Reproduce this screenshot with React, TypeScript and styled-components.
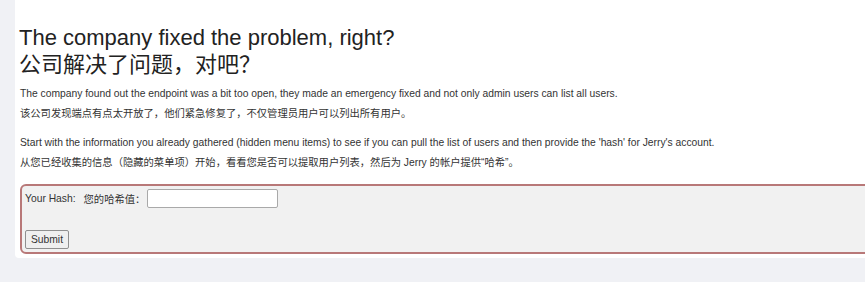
import React from 'react';
import styled, { createGlobalStyle } from 'styled-components';

const GlobalStyle = createGlobalStyle`
  html, body {
    margin: 0;
    padding: 0;
    background-color: #f0f1f5;
    overflow: hidden;
  }
  body {
    font-family: Arial, 'Liberation Sans', 'Noto Sans CJK SC', sans-serif;
    color: #333;
  }
`;

const App = () => {
  return (
    <>
      <GlobalStyle />
      <Page>
        <Panel>
          <Heading>
            The company fixed the problem, right?
            <br />
            公司解决了问题，对吧？
          </Heading>
          <Paragraph>
            The company found out the endpoint was a bit too open, they made an emergency fixed and not
            only admin users can list all users.
            <br />
            该公司发现端点有点太开放了，他们紧急修复了，不仅管理员用户可以列出所有用户。
          </Paragraph>
          <Paragraph>
            Start with the information you already gathered (hidden menu items) to see if you can pull
            the list of users and then provide the 'hash' for Jerry's account.
            <br />
            从您已经收集的信息（隐藏的菜单项）开始，看看您是否可以提取用户列表，然后为 Jerry 的帐户提供“哈希”。
          </Paragraph>
          <AttackForm onSubmit={(e) => e.preventDefault()}>
            <FieldRow>
              <Label>Your Hash:</Label>
              <Label>您的哈希值：</Label>
              <HashInput type="text" />
            </FieldRow>
            <SubmitButton type="submit">Submit</SubmitButton>
          </AttackForm>
        </Panel>
      </Page>
    </>
  );
};

export default App;

const Page = styled.div`
  padding-left: 15px;
  height: 282px;
  box-sizing: border-box;
`;

const Panel = styled.div`
  background-color: #fff;
  height: 258px;
  box-sizing: border-box;
  padding: 24px 0 0 5px;
  border-bottom-left-radius: 4px;
  overflow: hidden;
`;

const Heading = styled.h3`
  margin: 0 0 6px -1px;
  font-size: 22px;
  font-weight: normal;
  line-height: 27px;
  color: #222;
`;

const Paragraph = styled.p`
  margin: 0 0 9px 0;
  font-size: 10.3px;
  line-height: 20px;
  color: #333;
`;

const AttackForm = styled.form`
  margin-top: 11px;
  width: calc(100% + 20px);
  box-sizing: border-box;
  border: 2px solid #b87878;
  border-radius: 6px;
  background-color: #f1f1f1;
  padding: 3px 3px 3px 3px;
`;

const FieldRow = styled.div`
  display: flex;
  align-items: center;
  height: 19px;
  margin-bottom: 22px;
`;

const Label = styled.span`
  font-size: 10.3px;
  color: #333;
  margin-right: 8px;
  &:last-of-type {
    margin-right: 2px;
  }
`;

const HashInput = styled.input`
  width: 131px;
  height: 19px;
  box-sizing: border-box;
  border: 1px solid #a9a9a9;
  border-radius: 2px;
  background: #fff;
  padding: 1px 3px;
  font-size: 10.3px;
`;

const SubmitButton = styled.button`
  height: 19px;
  width: 44px;
  padding: 0;
  font-size: 10.3px;
  font-family: Arial, 'Liberation Sans', sans-serif;
  color: #333;
  background-color: #efefef;
  border: 1px solid #8f8f8f;
  border-radius: 2px;
  display: block;
`;
